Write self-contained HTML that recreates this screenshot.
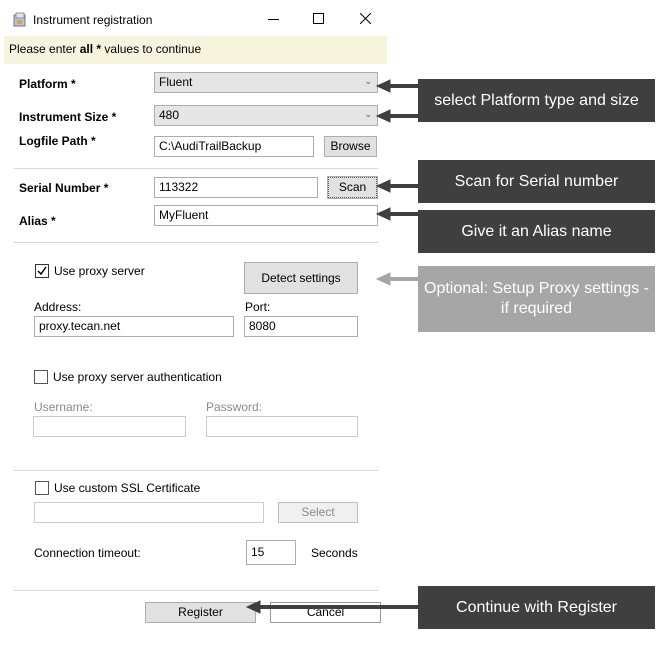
<!DOCTYPE html>
<html><head><style>
body{margin:0;width:660px;height:654px;background:#fff;font-family:"Liberation Sans",sans-serif;font-size:12px;color:#000;position:relative;overflow:hidden}
.a{position:absolute}
.lbl{position:absolute;font-size:12px}
.b{font-weight:bold}
.in{position:absolute;border:1px solid #abadb3;background:#fff;height:20px;box-sizing:border-box;padding:2px 4px;font-size:12px;line-height:15px}
.cb{position:absolute;border:1px solid #adadad;background:#e5e5e5;height:21px;box-sizing:border-box;padding:2px 4px;line-height:15px}
.btn{position:absolute;border:1px solid #adadad;background:#e1e1e1;box-sizing:border-box;text-align:center;font-size:12px}
.sep{position:absolute;left:14px;width:364px;height:1px;background:#d9d9d9}
.box{position:absolute;left:418px;width:237px;background:#3f3f3f;color:#fff;font-size:16px;text-align:center;display:flex;align-items:center;justify-content:center}
.chk{position:absolute;width:12px;height:12px;border:1px solid #333;background:#fff}
.g{color:#8a8a8a}
</style></head><body>
<!-- title bar -->
<svg class="a" style="left:12px;top:12px" width="16" height="16"><rect x="2" y="3" width="11" height="11" fill="#b9c3cf" stroke="#6b7785"/><rect x="4" y="1" width="8" height="5" fill="#e0e6ee" stroke="#8a95a3"/><rect x="5" y="8" width="5" height="4" fill="#d9a441"/></svg>
<div class="lbl" style="left:33px;top:13px">Instrument registration</div>
<div class="a" style="left:268px;top:19px;width:11px;height:1px;background:#000"></div>
<div class="a" style="left:313px;top:13px;width:9px;height:9px;border:1px solid #000"></div>
<svg class="a" style="left:360px;top:13px" width="11" height="11"><path d="M0 0L11 11M11 0L0 11" stroke="#000" stroke-width="1"/></svg>
<div class="a" style="left:4px;top:36px;width:383px;height:28px;background:#f6f4dd"></div>
<div class="lbl" style="left:9px;top:42px">Please enter <b>all *</b> values to continue</div>

<div class="lbl b" style="left:19px;top:77px">Platform *</div>
<div class="cb" style="left:154px;top:72px;width:224px">Fluent<span style="position:absolute;right:5px;top:1px;font-size:9px;color:#555">&#8964;</span></div>
<div class="lbl b" style="left:19px;top:110px">Instrument Size *</div>
<div class="cb" style="left:154px;top:105px;width:224px">480<span style="position:absolute;right:5px;top:1px;font-size:9px;color:#555">&#8964;</span></div>
<div class="lbl b" style="left:19px;top:134px">Logfile Path *</div>
<div class="in" style="left:154px;top:136px;width:160px;height:21px">C:\AudiTrailBackup</div>
<div class="btn" style="left:324px;top:136px;width:53px;height:21px;line-height:19px">Browse</div>
<div class="sep" style="top:168px"></div>
<div class="lbl b" style="left:19px;top:181px">Serial Number *</div>
<div class="in" style="left:154px;top:177px;width:164px;height:21px">113322</div>
<div class="btn" style="left:328px;top:177px;width:49px;height:21px;line-height:19px;border:1px dotted #555;background:#e1e1e1;outline:1px solid #adadad">Scan</div>
<div class="lbl b" style="left:19px;top:214px">Alias *</div>
<div class="in" style="left:154px;top:205px;width:224px;height:21px">MyFluent</div>
<div class="sep" style="top:242px"></div>

<div class="chk" style="left:35px;top:264px"><svg width="12" height="12" style="position:absolute;left:0;top:0"><path d="M2 6L5 9L10 2" stroke="#000" stroke-width="1.5" fill="none"/></svg></div>
<div class="lbl" style="left:54px;top:264px">Use proxy server</div>
<div class="btn" style="left:244px;top:262px;width:114px;height:32px;line-height:30px">Detect settings</div>
<div class="lbl" style="left:34px;top:300px">Address:</div>
<div class="in" style="left:34px;top:316px;width:200px;height:21px">proxy.tecan.net</div>
<div class="lbl" style="left:245px;top:300px">Port:</div>
<div class="in" style="left:244px;top:316px;width:114px;height:21px">8080</div>
<div class="chk" style="left:34px;top:370px;border-color:#555"></div>
<div class="lbl" style="left:53px;top:370px">Use proxy server authentication</div>
<div class="lbl g" style="left:34px;top:400px">Username:</div>
<div class="in" style="left:33px;top:416px;width:153px;height:21px;border-color:#ccc"></div>
<div class="lbl g" style="left:206px;top:400px">Password:</div>
<div class="in" style="left:206px;top:416px;width:152px;height:21px;border-color:#ccc"></div>
<div class="sep" style="top:470px"></div>

<div class="chk" style="left:35px;top:481px;border-color:#555"></div>
<div class="lbl" style="left:54px;top:481px">Use custom SSL Certificate</div>
<div class="in" style="left:34px;top:502px;width:230px;height:21px;border-color:#ccc"></div>
<div class="btn g" style="left:278px;top:502px;width:80px;height:21px;line-height:19px;background:#f0f0f0;border-color:#bfbfbf">Select</div>
<div class="lbl" style="left:34px;top:546px">Connection timeout:</div>
<div class="in" style="left:246px;top:540px;width:50px;height:25px;line-height:19px">15</div>
<div class="lbl" style="left:311px;top:546px">Seconds</div>
<div class="sep" style="top:590px"></div>
<div class="btn" style="left:145px;top:602px;width:111px;height:21px;line-height:19px">Register</div>
<div class="btn" style="left:270px;top:602px;width:111px;height:21px;line-height:19px;background:#fff;border-color:#999">Cancel</div>

<!-- callouts -->
<div class="box" style="top:79px;height:43px">select Platform type and size</div>
<div class="box" style="top:160px;height:43px">Scan for Serial number</div>
<div class="box" style="top:210px;height:43px">Give it an Alias name</div>
<div class="box" style="top:266px;height:66px;background:#a6a6a6;line-height:20px">Optional: Setup Proxy settings -<br>if required</div>
<div class="box" style="top:586px;height:43px">Continue with Register</div>
<svg class="a" style="left:0;top:0" width="660" height="654">
<g fill="#3f3f3f" stroke="#3f3f3f">
<path d="M418 86H388" stroke-width="4"/><path d="M377 86L390 80V92Z"/>
<path d="M418 116H388" stroke-width="4"/><path d="M377 116L390 110V122Z"/>
<path d="M418 186H388" stroke-width="4"/><path d="M377 186L390 180V192Z"/>
<path d="M418 214H388" stroke-width="4"/><path d="M377 214L390 208V220Z"/>
<path d="M418 607H258" stroke-width="4"/><path d="M247 607L260 601V613Z"/>
</g>
<g fill="#a6a6a6" stroke="#a6a6a6"><path d="M418 279H388" stroke-width="4"/><path d="M377 279L390 273V285Z"/></g>
</svg>
</body></html>
